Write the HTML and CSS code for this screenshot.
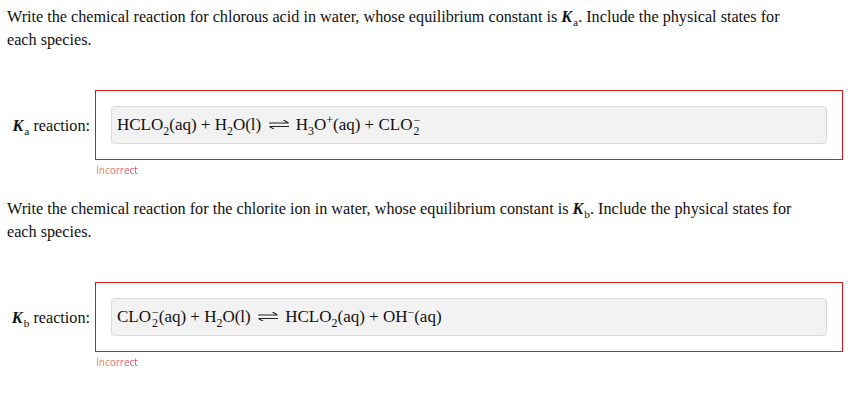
FILE: index.html
```html
<!DOCTYPE html>
<html lang="en">
<head>
  <meta charset="UTF-8">
  <title>Chlorous acid reactions</title>
  <link rel="stylesheet" href="styles.css">
</head>
<body>
  <div class="page">

    <!-- Ka question -->
    <div class="question">
      <p class="prompt">Write the chemical reaction for chlorous acid in water, whose equilibrium constant is <span class="k">K<sub>a</sub></span>. Include the physical states for each species.</p>
      <div class="answer">
        <label class="answer-label"><span class="k">K<sub>a</sub></span> reaction:</label>
        <div class="answer-box">
          <div class="answer-field">
            <span class="eq">HCLO<sub>2</sub>(aq) + H<sub>2</sub>O(l) <svg class="eqm" width="20" height="9" viewBox="0 0 20 9"><path d="M0 3h19.5M19.5 3l-5 -3M20 6.5H0.5M0.5 6.5l5 3" fill="none" stroke="#222" stroke-width="1.1"/></svg> H<sub>3</sub>O<sup>+</sup>(aq) + CLO<span class="subsup"><span>−</span><span>2</span></span></span>
          </div>
        </div>
        <div class="feedback">Incorrect</div>
      </div>
    </div>

    <!-- Kb question -->
    <div class="question">
      <p class="prompt">Write the chemical reaction for the chlorite ion in water, whose equilibrium constant is <span class="k">K<sub>b</sub></span>. Include the physical states for each species.</p>
      <div class="answer">
        <label class="answer-label"><span class="k">K<sub>b</sub></span> reaction:</label>
        <div class="answer-box">
          <div class="answer-field">
            <span class="eq">CLO<span class="subsup"><span>−</span><span>2</span></span>(aq) + H<sub>2</sub>O(l) <svg class="eqm" width="20" height="9" viewBox="0 0 20 9"><path d="M0 3h19.5M19.5 3l-5 -3M20 6.5H0.5M0.5 6.5l5 3" fill="none" stroke="#222" stroke-width="1.1"/></svg> HCLO<sub>2</sub>(aq) + OH<sup>−</sup>(aq)</span>
          </div>
        </div>
        <div class="feedback">Incorrect</div>
      </div>
    </div>

  </div>
</body>
</html>
```

FILE: styles.css
```css
/* General styling */
* {
  margin: 0;
  padding: 0;
  box-sizing: border-box;
}

body {
  font-family: "Liberation Serif", "Times New Roman", serif;
  background: #fff;
  color: #111;
}

.page {
  width: 800px;
  padding: 6px 0 0 7px;
}

/* Question text */
.prompt {
  font-size: 16.2px;
  line-height: 23.4px;
}

.question + .question {
  margin-top: 20px;
}

sub, sup {
  font-size: 0.7em;
  line-height: 0;
}

sub {
  vertical-align: -0.38em;
}

sup {
  vertical-align: 0.5em;
}

.k {
  font-weight: bold;
  font-style: italic;
}

.k sub {
  font-weight: normal;
  font-style: normal;
  margin-left: 1px;
}

/* Answer row */
.answer {
  display: grid;
  grid-template-columns: 88px 748px;
  align-items: center;
  margin-top: 37px;
}

.answer-label {
  font-size: 16.2px;
  text-align: right;
  padding-right: 5px;
  padding-top: 3px;
}

.answer-box {
  border: 1px solid #d7161f;
  padding: 15px;
}

.answer-field {
  height: 38px;
  background: #f2f2f2;
  border: 1px solid #dadada;
  border-radius: 4px;
  padding: 3px 0 0 5px;
  display: flex;
  align-items: center;
}

.eq {
  font-size: 17px;
  white-space: nowrap;
}

.eqm {
  vertical-align: 1px;
  margin: 0 3px;
}

/* charge stacked over the subscript */
.subsup {
  display: inline-flex;
  flex-direction: column;
  vertical-align: 6px;
  font-size: 0.7em;
  line-height: 11px;
  margin-left: 1px;
}

.feedback {
  grid-column: 2;
  margin: 2px 0 0 1px;
  font-family: "Open Sans", sans-serif;
  font-size: 10px;
  line-height: 16px;
  width: max-content;
  background: linear-gradient(90deg, #f28a2e, #e5366a);
  -webkit-background-clip: text;
  background-clip: text;
  color: transparent;
}
```
